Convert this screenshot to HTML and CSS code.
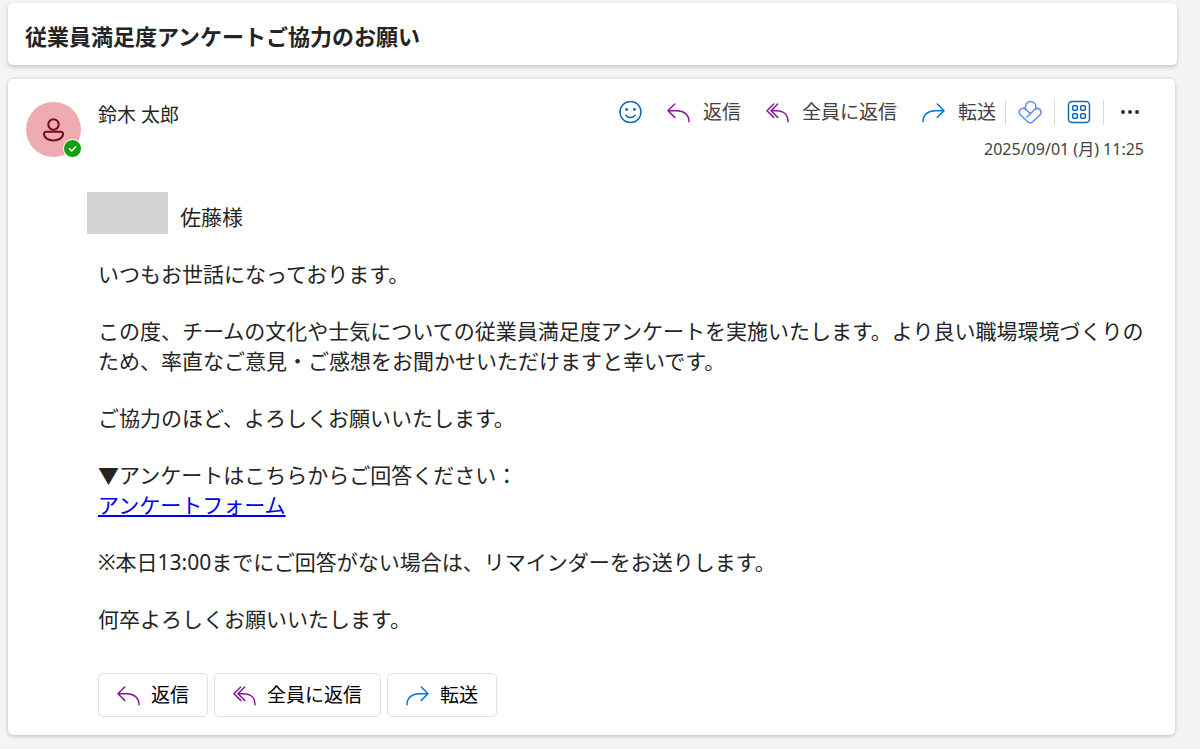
FILE: index.html
```html
<!DOCTYPE html>
<html lang="ja">
<head>
    <meta charset="UTF-8">
    <meta name="viewport" content="width=device-width, initial-scale=1.0">
    <title>従業員満足度アンケートご協力のお願い</title>
    <link rel="stylesheet" href="styles.css">
</head>
<body>
    <svg class="defs" aria-hidden="true">
        <symbol id="i-reply" viewBox="0 0 23 23">
            <path d="M7.7 3 1 9.7l6.7 6.7M1 9.7h9c7 0 12 4 12 11"/>
        </symbol>
        <symbol id="i-reply-all" viewBox="0 0 23 23">
            <path d="M7.7 3 1 9.7l6.7 6.7M11.7 3 5 9.7l6.7 6.7M5 9.7h5.5c7 0 11.5 4 11.5 11"/>
        </symbol>
        <symbol id="i-forward" viewBox="0 0 23 23">
            <path d="M15.3 3 22 9.7l-6.7 6.7M22 9.7h-9c-7 0-12 4-12 11"/>
        </symbol>
    </svg>

    <header class="subject">
        <h1>従業員満足度アンケートご協力のお願い</h1>
    </header>

    <main class="mail">
        <div class="head">
            <div class="avatar">
                <svg class="person" viewBox="0 0 24 26">
                    <circle cx="11.5" cy="7.5" r="5.2"/>
                    <path d="M4 14.8h15a2 2 0 0 1 2 2c0 4-4.3 6.7-9.5 6.7s-9.5-2.700-9.5-6.7a2 2 0 0 1 2-2z"/>
                </svg>
                <span class="status"><svg viewBox="0 0 17 17"><path d="m5.5 8.8 2.2 2.2 4-4.200"/></svg></span>
            </div>
            <div class="from">鈴木 太郎</div>
            <div class="side">
                <div class="tools">
                    <div class="actions">
                        <button type="button" class="smile" aria-label="リアクション">
                            <svg viewBox="0 0 23 23">
                                <circle cx="11.5" cy="11" r="10.5"/>
                                <path d="M6.7 14.2c2.2 3.2 7.4 3.2 9.6 0"/>
                                <circle class="dot" cx="7.6" cy="8.5" r="1.4"/>
                                <circle class="dot" cx="15.4" cy="8.5" r="1.4"/>
                            </svg>
                        </button>
                        <button type="button" class="purple"><svg><use href="#i-reply"/></svg>返信</button>
                        <button type="button" class="purple"><svg><use href="#i-reply-all"/></svg>全員に返信</button>
                        <button type="button" class="blue"><svg><use href="#i-forward"/></svg>転送</button>
                    </div>
                    <span class="line"></span>
                    <button type="button" class="loop" aria-label="Loop">
                        <svg viewBox="0 0 24 24">
                            <path d="M8 9.300A5.300 5.300 0 1 1 17.500 9"/>
                            <path d="m9 17 8-7.8a3.800 3.800 0 0 1 5.300 5.300L14.800 21.800a3.600 3.600 0 0 1-5 0L2.300 14.700a3.800 3.800 0 0 1 5.200-5.500l4.800 4.400"/>
                        </svg>
                    </button>
                    <span class="line"></span>
                    <button type="button" class="apps" aria-label="アプリ">
                        <svg viewBox="0 0 24 24">
                            <rect x="1.5" y="1.5" width="21" height="21" rx="3.5"/>
                            <rect x="5.7" y="5.7" width="4.6" height="4.6" rx="1"/>
                            <rect x="13.7" y="5.7" width="4.6" height="4.6" rx="1"/>
                            <rect x="5.7" y="13.7" width="4.6" height="4.6" rx="1"/>
                            <rect x="13.7" y="13.7" width="4.6" height="4.6" rx="1"/>
                        </svg>
                    </button>
                    <span class="line"></span>
                    <button type="button" class="more" aria-label="その他">
                        <svg viewBox="0 0 28 24">
                            <circle cx="7" cy="12" r="1.9"/>
                            <circle cx="14" cy="12" r="1.9"/>
                            <circle cx="21" cy="12" r="1.9"/>
                        </svg>
                    </button>
                </div>
                <time datetime="2025-09-01T11:25">2025/09/01 (月) 11:25</time>
            </div>
        </div>

        <div class="content">
            <div class="greeting"><span class="mask"></span><span class="to">佐藤様</span></div>
            <p>いつもお世話になっております。</p>
            <p>この度、チームの文化や士気についての従業員満足度アンケートを実施いたします。より良い職場環境づくりのため、率直なご意見・ご感想をお聞かせいただけますと幸いです。</p>
            <p>ご協力のほど、よろしくお願いいたします。</p>
            <p>▼アンケートはこちらからご回答ください：<br><a href="#">アンケートフォーム</a></p>
            <p>※本日13:00までにご回答がない場合は、リマインダーをお送りします。</p>
            <p>何卒よろしくお願いいたします。</p>
            <div class="btns">
                <button type="button" class="purple"><svg><use href="#i-reply"/></svg>返信</button>
                <button type="button" class="purple"><svg><use href="#i-reply-all"/></svg>全員に返信</button>
                <button type="button" class="blue"><svg><use href="#i-forward"/></svg>転送</button>
            </div>
        </div>
    </main>
</body>
</html>
```
FILE: styles.css
```css
body,h1,p{
    margin:0;
}
body{
    padding:3px 23px 0 8px;
    background-color:#f4f4f4;
    color:#242424;
    font-family:"Noto Sans","Noto Sans CJK JP",sans-serif;
}
button{
    display:flex;
    align-items:center;
    padding:0;
    border:none;
    background:none;
    font-family:inherit;
    font-size:19px;
    line-height:24px;
    color:#424242;
    white-space:nowrap;
}
svg{
    display:block;
    flex:none;
    fill:none;
    stroke:currentColor;
    stroke-width:1.5;
    stroke-linecap:round;
    stroke-linejoin:round;
}
.defs{
    position:absolute;
    width:0;
    height:0;
}
/* 件名 */
.subject{
    padding:17px 17px 13px;
    border-radius:5px;
    background-color:#fff;
    box-shadow:0 2px 4px rgba(0,0,0,.2);
}
.subject h1{
    font-size:22px;
    line-height:32px;
}
/* メール本体 */
.mail{
    margin:14px 2px 14px 0;
    padding:23px 20px 18px 18px;
    border-radius:5px;
    background-color:#fff;
    box-shadow:0 1px 4px rgba(0,0,0,.24);
}
.head{
    display:flex;
    padding-right:11px;
}
.avatar{
    position:relative;
    display:flex;
    align-items:center;
    justify-content:center;
    width:55px;
    height:55px;
    border-radius:50%;
    background-color:#eeacb2;
    color:#750b1c;
}
.person{
    width:24px;
    height:26px;
    stroke-width:2;
}
.status{
    position:absolute;
    right:-1px;
    bottom:-1px;
    width:17px;
    height:17px;
    border:1px solid #fff;
    border-radius:50%;
    background-color:#13a10e;
    color:#fff;
}
.from{
    margin-left:17px;
    font-size:19px;
    line-height:26px;
}
.side{
    margin-left:auto;
}
.tools{
    display:flex;
    align-items:center;
    gap:12px;
    height:20px;
}
.actions{
    display:flex;
    gap:25px;
    margin-right:-3px;
}
.tools button{
    gap:13px;
}
.actions svg,
.btns svg{
    width:23px;
    height:23px;
}
.purple svg{
    color:#881798;
}
.blue svg{
    color:#0078d4;
}
.smile svg,
.apps svg{
    color:#1169b4;
}
.dot{
    fill:currentColor;
    stroke:none;
}
.line{
    width:1px;
    height:25px;
    background-color:#d6d6d6;
}
.loop svg,
.apps svg{
    width:24px;
    height:24px;
}
.loop svg{
    color:#5b8def;
}
.more svg{
    width:28px;
    height:24px;
    fill:#242424;
    stroke:none;
}
time{
    display:block;
    margin-top:15px;
    font-size:16px;
    line-height:24px;
    text-align:right;
    color:#424242;
}
/* 本文 */
.content{
    margin:31px 0 0 72px;
    font-size:21px;
    line-height:30px;
}
.greeting{
    display:flex;
    align-items:flex-end;
    gap:12px;
    margin:0 0 25px -11px;
}
.mask{
    width:81px;
    height:42px;
    background-color:#d1d3d4;
}
.to{
    padding-bottom:2px;
}
.content p{
    margin-bottom:27px;
}
.content a{
    color:#0000ee;
}
.btns{
    display:flex;
    gap:6px;
    margin-top:39px;
}
.btns button{
    gap:11px;
    height:44px;
    padding:0 18px;
    border:1px solid #e0e0e0;
    border-radius:5px;
    color:#000;
}
```
